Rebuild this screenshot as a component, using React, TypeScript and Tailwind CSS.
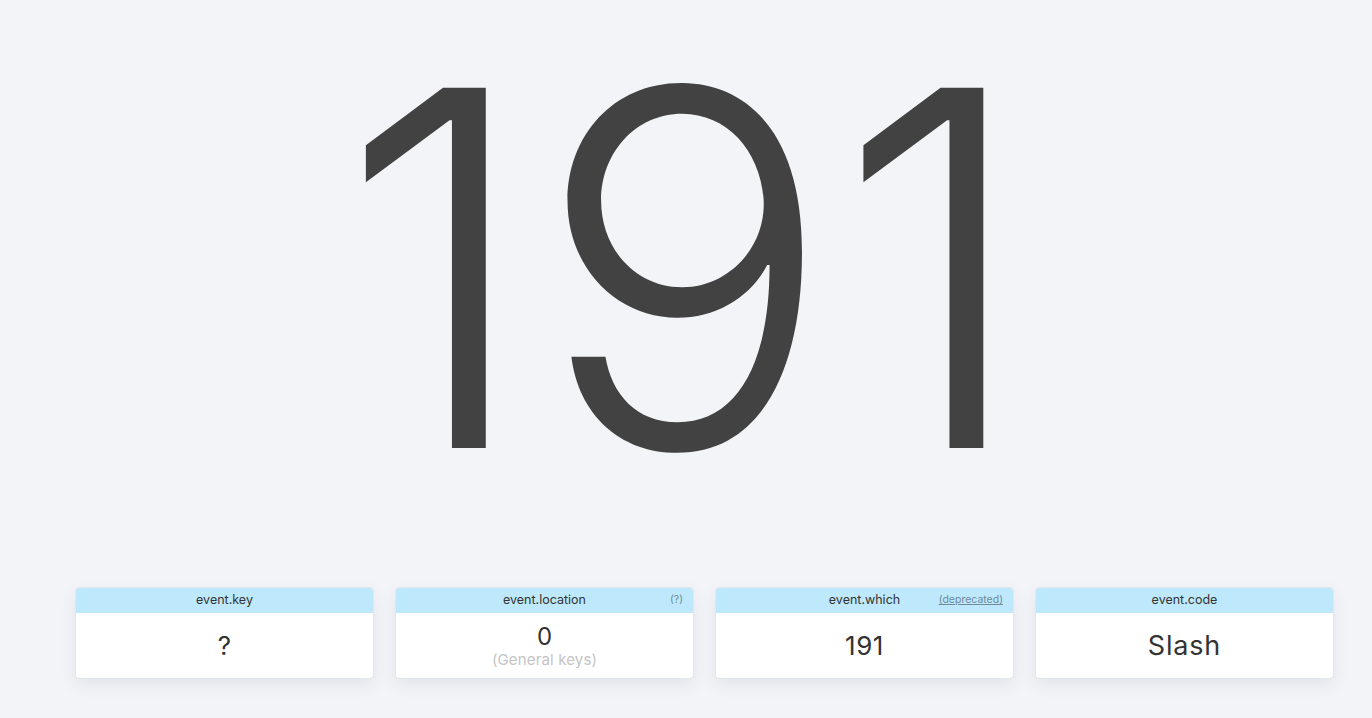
import React from "react";

const font = { fontFamily: "Inter, 'Open Sans', sans-serif" };

function Card({
  title,
  note,
  children,
}: {
  title: string;
  note?: React.ReactNode;
  children: React.ReactNode;
}) {
  return (
    <div className="flex h-[92px] flex-col overflow-hidden rounded-[4px] border border-[#e3e6ea] bg-white shadow-[0_6px_16px_rgba(40,50,80,0.08)]">
      <div className="relative flex h-[25px] shrink-0 items-center justify-center bg-[#bee9fc] text-[12.5px] text-[#333]">
        <span>{title}</span>
        {note ? (
          <span className="absolute right-[10px] top-[6px] text-[10.5px] leading-[12px] text-[#6f8a99]">
            {note}
          </span>
        ) : null}
      </div>
      <div className="flex flex-1 flex-col items-center justify-center text-[#333]">
        {children}
      </div>
    </div>
  );
}

export default function App() {
  return (
    <div
      className="flex h-[718px] w-full flex-col overflow-hidden bg-[#f3f4f8] text-[#424242]"
      style={font}
    >
      <div className="flex h-[568px] shrink-0 items-start justify-center overflow-visible">
        <div className="mt-[-32px] text-[495px] font-light leading-[600px] tracking-[0.005em] text-[#424242]">
          191
        </div>
      </div>
      <div className="mt-[19px] grid grid-cols-4 gap-[21px] pl-[75px] pr-[38px]">
        <Card title="event.key">
          <div className="text-[26px] leading-[30px]">?</div>
        </Card>
        <Card title="event.location" note="(?)">
          <div className="mt-[2px] text-[24px] leading-[26px]">0</div>
          <div className="text-[15px] leading-[19px] tracking-[0.01em] text-[#c4c4c4]">
            (General keys)
          </div>
        </Card>
        <Card
          title="event.which"
          note={<span className="underline">(deprecated)</span>}
        >
          <div className="text-[26px] leading-[30px] tracking-[0.02em]">191</div>
        </Card>
        <Card title="event.code">
          <div className="text-[27px] leading-[30px] tracking-[0.03em]">Slash</div>
        </Card>
      </div>
    </div>
  );
}
